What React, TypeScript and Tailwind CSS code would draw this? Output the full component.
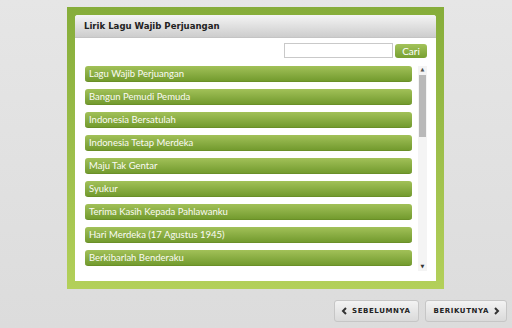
import { useState } from "react";

const SONGS: string[] = [
  "Lagu Wajib Perjuangan",
  "Bangun Pemudi Pemuda",
  "Indonesia Bersatulah",
  "Indonesia Tetap Merdeka",
  "Maju Tak Gentar",
  "Syukur",
  "Terima Kasih Kepada Pahlawanku",
  "Hari Merdeka (17 Agustus 1945)",
  "Berkibarlah Benderaku",
];

function Chevron({ dir }: { dir: "left" | "right" }) {
  return (
    <svg className="w-[7px] h-[8px]" viewBox="0 0 7 8" aria-hidden="true">
      <path
        d={dir === "left" ? "M5 1L2 4l3 3" : "M2 1l3 3-3 3"}
        fill="none"
        stroke="#333"
        strokeWidth={2}
      />
    </svg>
  );
}

export default function App() {
  const [query, setQuery] = useState("");

  return (
    <div className="w-[512px] h-[328px] bg-gradient-to-b from-[#e6e6e6] to-[#dcdcdc] overflow-hidden font-['DejaVu_Sans',sans-serif] flex flex-col">
      {/* Green frame */}
      <div className="ml-[67px] mt-[7px] w-[377px] h-[282px] p-[8px] bg-gradient-to-b from-[#86ad3a] to-[#b3d05a]">
        <div className="w-full h-full bg-white rounded-t-[3px] flex flex-col">
          {/* Header */}
          <div className="h-[23px] flex items-center px-[9px] rounded-t-[3px] bg-gradient-to-b from-[#f4f4f4] to-[#cdcdcd] border-b border-[#c4c4c4]">
            <span className="text-[9.5px] font-bold text-[#222] font-['DejaVu_Sans_Condensed','DejaVu_Sans',sans-serif]">
              Lirik Lagu Wajib Perjuangan
            </span>
          </div>

          {/* Search */}
          <div className="flex justify-end items-center gap-[2px] pr-[9px] mt-[5px]">
            <input
              value={query}
              onChange={(e) => setQuery(e.target.value)}
              className="w-[109px] h-[15px] border border-[#c9c9c9] bg-white outline-none text-[10px] px-1"
            />
            <button className="w-[32px] h-[14px] rounded-[3px] bg-gradient-to-b from-[#a3c35a] to-[#77a030] text-white text-[10px] leading-none font-['Lato',sans-serif]">
              Cari
            </button>
          </div>

          {/* List + scrollbar */}
          <div className="flex mt-[8px] pl-[10px] pr-[9px]">
            <div className="flex-1 flex flex-col gap-[7px]">
              {SONGS.map((s) => (
                <div
                  key={s}
                  className="h-[16px] rounded-[3px] bg-gradient-to-b from-[#a2c158] to-[#739b2e] border-b border-[#6a8f28] flex items-center pl-[4px] text-[#fbfbf4] text-[9.5px] font-['Lato',sans-serif] leading-none"
                >
                  {s}
                </div>
              ))}
            </div>
            <div className="w-[9px] ml-[6px] h-[205px] bg-[#f4f4f4] flex flex-col items-center">
              <span className="text-[5px] leading-none text-[#555] mt-[1px]">▲</span>
              <div className="w-[7px] h-[62px] bg-[#b9b9b9] mt-[3px]" />
              <div className="flex-1" />
              <span className="text-[5px] leading-none text-[#333] mb-[2px]">▼</span>
            </div>
          </div>
        </div>
      </div>

      {/* Nav buttons */}
      <div className="flex justify-end gap-[6px] pr-[5px] mt-[11px]">
        <button className="w-[85px] h-[22px] rounded-[3px] border border-[#c6c6c6] bg-gradient-to-b from-[#f3f3f3] to-[#dadada] flex items-center pl-[6px] gap-[4px] text-[7px] font-bold text-[#222] tracking-[0.6px]">
          <Chevron dir="left" />
          SEBELUMNYA
        </button>
        <button className="w-[82px] h-[22px] rounded-[3px] border border-[#c6c6c6] bg-gradient-to-b from-[#f3f3f3] to-[#dadada] flex items-center justify-end pr-[6px] gap-[4px] text-[7px] font-bold text-[#222] tracking-[0.6px]">
          BERIKUTNYA
          <Chevron dir="right" />
        </button>
      </div>
    </div>
  );
}
